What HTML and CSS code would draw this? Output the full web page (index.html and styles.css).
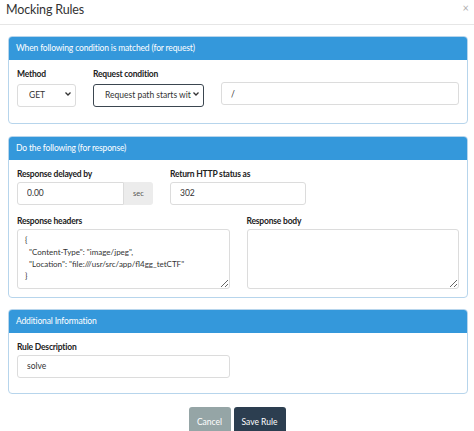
FILE: index.html
```html
<!DOCTYPE html>
<html>
<head>
<meta charset="utf-8">
<link rel="stylesheet" href="styles.css">
</head>
<body>
<div class="modal">
  <div class="modal-header">
    <span class="modal-title">Mocking Rules</span>
    <span class="close">×</span>
  </div>
  <div class="modal-body">
    <div class="panel">
      <div class="panel-heading">When following condition is matched (for request)</div>
      <div class="panel-body">
        <div class="row row-1">
          <div class="field">
            <label>Method</label>
            <div class="select-wrap">
              <select class="control"><option>GET</option></select>
              <svg class="chev" width="8" height="6" viewBox="0 0 8 6"><path d="M1.5 1.5 L4 4 L6.5 1.5" fill="none" stroke="#333" stroke-width="1.3"/></svg>
            </div>
          </div>
          <div class="field">
            <label>Request condition</label>
            <div class="select-wrap">
              <select class="control focused"><option>Request path starts with</option></select>
              <svg class="chev" width="8" height="6" viewBox="0 0 8 6"><path d="M1.5 1.5 L4 4 L6.5 1.5" fill="none" stroke="#333" stroke-width="1.3"/></svg>
            </div>
          </div>
          <div class="field">
            <label>&nbsp;</label>
            <input class="control" type="text" value="/">
          </div>
        </div>
      </div>
    </div>

    <div class="panel">
      <div class="panel-heading">Do the following (for response)</div>
      <div class="panel-body tight">
        <div class="row row-3">
          <div class="field">
            <label>Response delayed by</label>
            <div class="input-group">
              <input class="control" type="text" value="0.00">
              <span class="addon">sec</span>
            </div>
          </div>
          <div class="field">
            <label>Return HTTP status as</label>
            <input class="control" type="text" value="302">
          </div>
        </div>
        <div class="row row-2">
          <div class="field">
            <label>Response headers</label>
            <textarea class="control area">{
  "Content-Type": "image/jpeg",
  "Location": "file:///usr/src/app/fl4gg_tetCTF"
}</textarea>
          </div>
          <div class="field">
            <label>Response body</label>
            <textarea class="control area"></textarea>
          </div>
        </div>
      </div>
    </div>

    <div class="panel">
      <div class="panel-heading">Additional Information</div>
      <div class="panel-body">
        <div class="row row-2">
          <div class="field">
            <label>Rule Description</label>
            <input class="control" type="text" value="solve">
          </div>
        </div>
      </div>
    </div>
  </div>
  <div class="modal-footer">
    <button class="btn btn-cancel">Cancel</button>
    <button class="btn btn-save">Save Rule</button>
  </div>
</div>
</body>
</html>
```
FILE: styles.css
```css
html, body {
  margin: 0;
  padding: 0;
  background: #fff;
}
body {
  font-family: Lato, "Open Sans", sans-serif;
  color: #222;
  width: 474px;
  height: 431px;
  overflow: hidden;
}
.modal-header {
  height: 25px;
  box-sizing: border-box;
  border-bottom: 1px solid #e6e6e6;
  display: flex;
  align-items: center;
  justify-content: space-between;
  padding: 0 5px 5px 6px;
}
.modal-title {
  font-size: 12.5px;
  letter-spacing: -0.15px;
  color: #333;
}
.close {
  font-size: 11px;
  color: #b0b0b0;
  margin-top: -4px;
}
.modal-body {
  padding: 11px 6px 0 8px;
  display: flex;
  flex-direction: column;
  gap: 12px;
}
.panel {
  border: 1px solid #b7d5ec;
  border-radius: 4px;
  overflow: hidden;
}
.panel:last-child {
  margin-top: -1px;
}
.panel-heading {
  background: #3498db;
  color: #fff;
  font-size: 8.5px;
  letter-spacing: -0.15px;
  height: 23px;
  line-height: 23px;
  padding-left: 7px;
}
.panel-body {
  padding: 8px 8px 16px 8px;
  display: flex;
  flex-direction: column;
  gap: 10px;
}
.panel-body.tight {
  padding-bottom: 8px;
}
.row {
  display: grid;
  column-gap: 17px;
}
.row-1 {
  grid-template-columns: 59px 111px 1fr;
}
.row-3 {
  grid-template-columns: 136px 136px 136px;
}
.row-2 {
  grid-template-columns: 1fr 1fr;
}
.field {
  display: flex;
  flex-direction: column;
}
label {
  font-size: 8.5px;
  letter-spacing: -0.2px;
  font-weight: bold;
  line-height: 12px;
  height: 12px;
  margin-bottom: 2px;
  color: #222;
}
.control {
  box-sizing: border-box;
  height: 23px;
  width: 100%;
  border: 1px solid #dcdcdc;
  border-radius: 3px;
  font-family: Lato, "Open Sans", sans-serif;
  font-size: 8.5px;
  color: #333;
  padding: 0 9px;
  background: #fff;
  outline: none;
  margin: 0;
}
.select-wrap {
  position: relative;
}
select.control {
  -webkit-appearance: none;
  appearance: none;
  padding: 0 12px 0 11px;
}
select.focused {
  border: 1px solid #3b4650;
}
.chev {
  position: absolute;
  right: 4px;
  top: 9px;
  pointer-events: none;
}
.input-group {
  display: flex;
}
.input-group .control {
  border-radius: 3px 0 0 3px;
  flex: 1;
  min-width: 0;
}
.addon {
  width: 29px;
  height: 23px;
  box-sizing: border-box;
  background: #ececec;
  border-radius: 0 3px 3px 0;
  font-size: 7.5px;
  color: #555;
  display: flex;
  align-items: center;
  justify-content: center;
}
.area {
  height: 60px;
  padding: 4px 7px;
  line-height: 12px;
  resize: vertical;
  font-size: 8px;
  white-space: pre;
  overflow: hidden;
}
.panel:last-child .panel-body {
  padding-bottom: 15px;
}
.modal-footer {
  display: flex;
  justify-content: center;
  gap: 3px;
  padding-top: 13px;
}
.btn {
  font-family: Lato, "Open Sans", sans-serif;
  font-size: 8.5px;
  color: #fff;
  border: none;
  border-radius: 3px;
  height: 30px;
  padding: 0;
}
.btn-cancel {
  background: #95a5a6;
  width: 42px;
}
.btn-save {
  background: #2c3e50;
  width: 52px;
}
```
